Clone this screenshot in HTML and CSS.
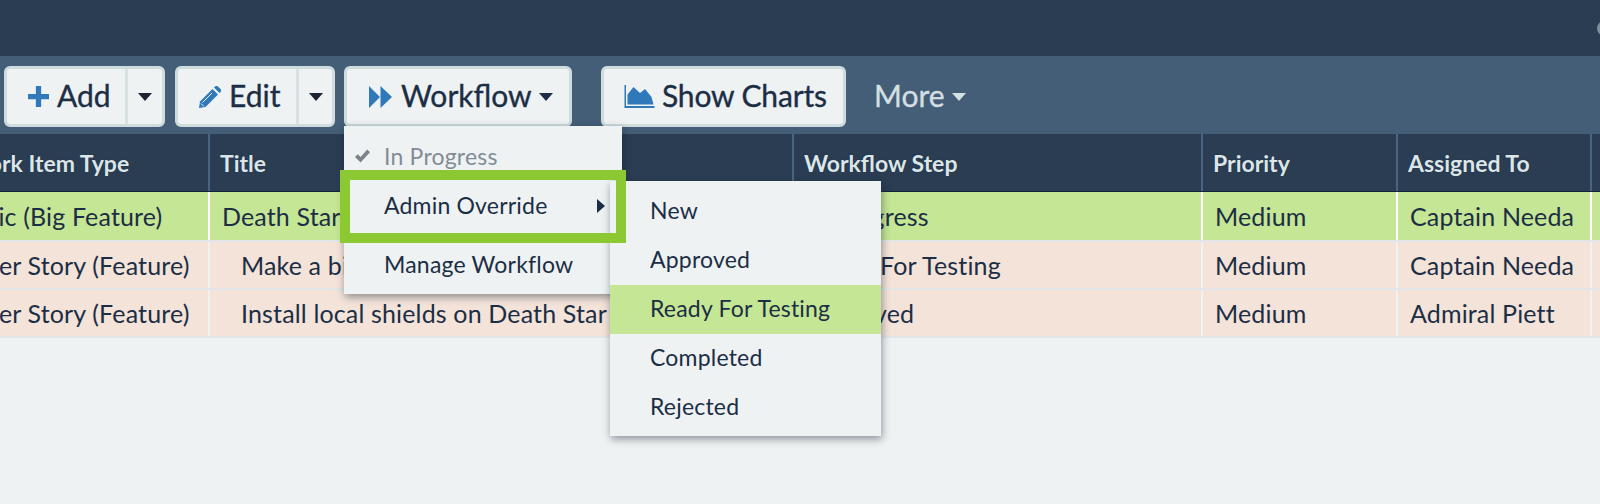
FILE: index.html
```html
<!DOCTYPE html>
<html lang="en">
<head>
<meta charset="utf-8">
<title>Workflow</title>
<link rel="stylesheet" href="styles.css">
</head>
<body>
<div class="page">
  <header class="topbar"><span class="top-icon"></span></header>
  <nav class="toolbar">
    <div class="btn split">
      <span class="btn-main"><svg class="icon plus" viewBox="0 0 20 20"><path d="M7.500 0h5v7.500H20v5h-7.500V20h-5v-7.500H0v-5h7.500z"/></svg><b>Add</b></span>
      <span class="btn-caret"><i class="caret"></i></span>
    </div>
    <div class="btn split edit">
      <span class="btn-main"><svg class="icon pencil" viewBox="0 0 22 22"><path d="M1 15.500L13.500 3l5.500 5.500L6.500 21 0 22z"/><path d="M15 1.500l.8-.8a2.400 2.400 0 0 1 3.400 0l2.100 2.100a2.400 2.400 0 0 1 0 3.400l-.8.8z"/><path class="pencil-cut" d="M3.500 16.500l9.500-9.500M2 17.500l3 3"/></svg><b>Edit</b></span>
      <span class="btn-caret"><i class="caret"></i></span>
    </div>
    <div class="btn workflow">
      <span class="btn-main"><svg class="icon forward" viewBox="0 0 23 22"><path d="M0 0l11 11L0 22zM11.500 0L23 11 11.500 22z"/></svg><b>Workflow</b><i class="caret navy"></i></span>
    </div>
    <div class="btn charts">
      <span class="btn-main"><svg class="icon area" viewBox="0 0 30 23"><path d="M0 0h1.500v21H30v2H0z"/><path d="M3 19.500V9.500L9 2l6.500 6 5-4L27 12l2 7.500z"/></svg><b>Show Charts</b></span>
    </div>
    <div class="more"><span>More</span><i class="caret light"></i></div>
  </nav>

  <main class="grid">
    <div class="row head">
      <div class="cell">Work Item Type</div>
      <div class="cell">Title</div>
      <div class="cell">Workflow Step</div>
      <div class="cell">Priority</div>
      <div class="cell">Assigned To</div>
      <div class="cell"></div>
    </div>
    <div class="row epic">
      <div class="cell">Epic (Big Feature)</div>
      <div class="cell">Death Star</div>
      <div class="cell">In Progress</div>
      <div class="cell">Medium</div>
      <div class="cell">Captain Needa</div>
      <div class="cell"></div>
    </div>
    <div class="row story">
      <div class="cell">User Story (Feature)</div>
      <div class="cell indent">Make a big laser</div>
      <div class="cell">Ready For Testing</div>
      <div class="cell">Medium</div>
      <div class="cell">Captain Needa</div>
      <div class="cell"></div>
    </div>
    <div class="row story">
      <div class="cell">User Story (Feature)</div>
      <div class="cell indent">Install local shields on Death Star</div>
      <div class="cell">Approved</div>
      <div class="cell">Medium</div>
      <div class="cell">Admiral Piett</div>
      <div class="cell"></div>
    </div>
  </main>

  <div class="menu main-menu">
    <div class="item disabled"><svg class="check" viewBox="0 0 16 14"><path d="M0 8l3-3 3 3 7-8 3 3L6 14z"/></svg>In Progress</div>
    <div class="item">Admin Override<i class="arrow"></i></div>
    <div class="item">Manage Workflow</div>
  </div>
  <div class="menu sub-menu">
    <div class="item">New</div>
    <div class="item">Approved</div>
    <div class="item active">Ready For Testing</div>
    <div class="item">Completed</div>
    <div class="item">Rejected</div>
  </div>
  <div class="highlight"></div>
</div>
</body>
</html>
```

FILE: styles.css
```css
* { box-sizing: border-box; }
html, body { margin: 0; padding: 0; }
body {
  width: 1600px;
  height: 504px;
  overflow: hidden;
  background: #eef2f3;
  font-family: Lato, "Liberation Sans", sans-serif;
  color: #1c2e45;
}
.page { position: relative; width: 1600px; height: 504px; overflow: hidden; }

.topbar { position: relative; height: 56px; background: #2a3d53; }
.top-icon {
  position: absolute; right: -12px; top: 21px;
  width: 15px; height: 15px; border-radius: 50%;
  border: 3px solid #7f8e9c;
}

.toolbar {
  height: 78px;
  background: #435e76;
  display: flex;
  align-items: flex-start;
  padding: 10px 0 0 4px;
}
.btn {
  height: 61px;
  display: flex;
  align-items: stretch;
  background: #eef2f3;
  border: 3px solid #cfdcdd;
  border-radius: 6px;
  color: #1c2e45;
  font-size: 30px;
  flex: none;
}
.btn b { font-weight: 400; -webkit-text-stroke: 0.35px currentColor; margin-top: -3px; }
.btn-main { display: flex; align-items: center; flex: 1; }
.btn-caret { width: 37px; border-left: 3px solid #d8e1e2; display: flex; align-items: center; justify-content: center; }
.split { width: 161px; }
.split .btn-main { padding-left: 21px; }
.split.edit { width: 160px; margin-left: 10px; }
.split.edit .btn-main { padding-left: 21px; }
.split.edit .btn-caret { width: 36px; }
.workflow { width: 228px; margin-left: 9px; }
.workflow .btn-main { padding-left: 22px; }
.charts { width: 245px; margin-left: 29px; }
.charts .btn-main { padding-left: 20px; }
.charts b { letter-spacing: -.15px; }

.icon { flex: none; fill: #2f78b9; }
.plus { width: 21px; height: 21px; margin-right: 8px; }
.pencil { width: 22px; height: 22px; margin-right: 8px; }
.pencil-cut { fill: none; stroke: #eef2f3; stroke-width: 1; }
.forward { width: 23px; height: 22px; margin-right: 9px; }
.area { width: 31px; height: 23px; margin-right: 7px; }

.caret {
  display: block; width: 0; height: 0; flex: none;
  border-left: 7.500px solid transparent;
  border-right: 7.500px solid transparent;
  border-top: 8px solid #1c2433;
}
.caret.navy { margin-left: 7px; border-top-color: #1c2e45; }
.caret.light { margin-left: 7px; border-top-color: #d3dfe2; }

.more {
  display: flex; align-items: center;
  margin-left: 28px; height: 61px;
  color: #d3dfe2; font-size: 30px;
}
.more span { -webkit-text-stroke: 0.35px currentColor; margin-top: -3px; }

.grid { display: block; }
.row {
  display: grid;
  grid-template-columns: 253px 584px 409px 195px 194px 60px;
  margin-left: -43px;
}
.cell { padding-left: 12px; display: flex; align-items: center; white-space: nowrap; border-right: 2px solid #fff; }
.epic .cell, .story .cell { padding-bottom: 1px; }
.epic .cell:first-child, .story .cell:first-child { padding-left: 13px; }
.head { height: 58px; background: #2a3d53; color: #dce6e8; font-size: 23px; font-weight: 700; border-bottom: 1px solid #14233a; }
.head .cell { padding-left: 10px; border-right-color: #4a6580; text-shadow: 0 0 1px #10203a; }
.head .cell:first-child { padding-left: 9px; }
.epic, .story { font-size: 25px; letter-spacing: .15px; border-bottom: 2px solid #e2e6e8; }
.epic { height: 50px; background: #c5e694; }
.story { height: 48px; background: #f3e3d9; }
.story .cell { border-right-color: #eef2f3; }
.story .indent { padding-left: 31px; }

.menu {
  position: absolute;
  background: #eef2f3;
  box-shadow: 1px 3px 8px rgba(20, 30, 45, .45);
  font-size: 23px;
  letter-spacing: .2px;
}
.main-menu { left: 344px; top: 126px; width: 278px; height: 168px; padding-top: 6px; }
.main-menu .item { height: 48px; padding-left: 40px; display: flex; align-items: center; position: relative; }
.main-menu .item:nth-child(2) { height: 50px; margin-bottom: 10px; }
.disabled { color: #818c96; }
.check { position: absolute; left: 11px; top: 17px; width: 15px; height: 14px; fill: #7b838b; }
.arrow {
  position: absolute; left: 253px; top: 19px;
  width: 0; height: 0;
  border-top: 7px solid transparent;
  border-bottom: 7px solid transparent;
  border-left: 8px solid #1c2e45;
}
.sub-menu { left: 610px; top: 181px; width: 271px; height: 255px; padding-top: 6px; }
.sub-menu .item { height: 49px; padding: 0 0 3px 40px; display: flex; align-items: center; }
.active { background: #c5e694; }
.highlight {
  position: absolute; left: 340px; top: 170px; width: 286px; height: 73px;
  border: 10px solid #8cc832;
}
```
